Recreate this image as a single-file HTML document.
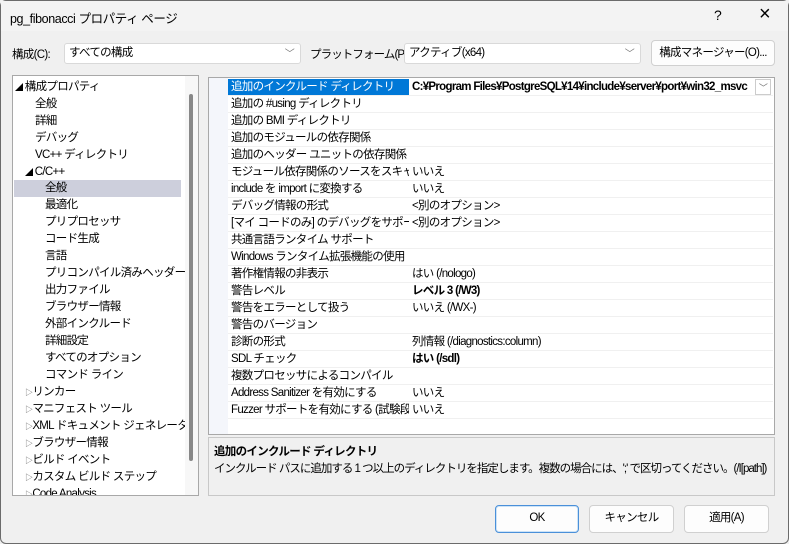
<!DOCTYPE html>
<html><head><meta charset="utf-8"><style>
*{margin:0;padding:0;box-sizing:border-box}
body{width:789px;height:544px;background:#f0f0f0;font-family:"Liberation Sans","Noto Sans CJK JP",sans-serif;font-size:11.5px;letter-spacing:-0.7px;color:#000;position:relative;overflow:hidden}
.abs{position:absolute;white-space:nowrap}
.win{position:absolute;left:0;top:0;width:789px;height:544px;border:1px solid #6b6b6b;border-radius:6px;background:#f0f0f0}
.title{position:absolute;left:1px;top:1px;width:787px;height:30px;background:#f3f3f3}
.combo{position:absolute;height:21px;background:#fff;border:1px solid #d9d9d9;border-radius:3px;padding:2px 4px;line-height:15px;white-space:nowrap}
.chev{position:absolute;right:6px;top:3px;color:#777;font-size:10px}
.btn{position:absolute;background:#fdfdfd;border:1px solid #d0d0d0;border-radius:4px;text-align:center;line-height:25px;white-space:nowrap}
.tree{position:absolute;left:12px;top:75px;width:187px;height:421px;background:#fff;border:1px solid #a8a8a8;overflow:hidden}
.ti{position:absolute;height:17px;line-height:17px;white-space:nowrap}
.grid{position:absolute;left:208px;top:77px;width:567px;height:358px;background:#fff;border:1px solid #a8a8a8;overflow:hidden}
.row{position:absolute;left:19px;width:545px;height:17px;border-bottom:1px solid #f0f0f0;line-height:16px}
.row .n{position:absolute;left:3px;width:178px;overflow:hidden;white-space:nowrap}
.row .v{position:absolute;left:184px;white-space:nowrap;overflow:hidden;width:355px}
.desc{position:absolute;left:208px;top:437px;width:567px;height:59px;border:1px solid #c8c8c8;background:#f0f0f0;overflow:hidden}
</style></head><body>
<div class="win"></div>
<div class="title"></div>
<div class="abs" style="left:10px;top:8px;font-size:12.5px;letter-spacing:-0.4px">pg_fibonacci プロパティ ページ</div>
<div class="abs" style="left:714px;top:7px;font-size:14px">?</div>
<div class="abs" style="left:759px;top:3px;font-size:20px;font-weight:300">×</div>

<div class="abs" style="left:12px;top:46px">構成(C):</div>
<div class="combo" style="left:64px;top:43px;width:237px">すべての構成<span class="chev">﹀</span></div>
<div class="abs" style="left:310px;top:46px;letter-spacing:-0.9px">プラットフォーム(P):</div>
<div class="combo" style="left:404px;top:43px;width:237px">アクティブ(x64)<span class="chev">﹀</span></div>
<div class="btn" style="left:651px;top:40px;width:124px;height:26px">構成マネージャー(O)...</div>

<div class="tree">
<div class="ti" style="left:2px;top:3px"><span style="font-size:8px">◢</span> 構成プロパティ</div>
<div class="ti" style="left:22px;top:20px">全般</div>
<div class="ti" style="left:22px;top:37px">詳細</div>
<div class="ti" style="left:22px;top:54px">デバッグ</div>
<div class="ti" style="left:22px;top:71px">VC++ ディレクトリ</div>
<div class="ti" style="left:12px;top:88px"><span style="font-size:8px">◢</span> C/C++</div>
<div class="ti" style="left:1px;top:104px;width:167px;background:#cdcfdc"></div>
<div class="ti" style="left:32px;top:104px">全般</div>
<div class="ti" style="left:32px;top:121px">最適化</div>
<div class="ti" style="left:32px;top:138px">プリプロセッサ</div>
<div class="ti" style="left:32px;top:155px">コード生成</div>
<div class="ti" style="left:32px;top:172px">言語</div>
<div class="ti" style="left:32px;top:189px">プリコンパイル済みヘッダー</div>
<div class="ti" style="left:32px;top:206px">出力ファイル</div>
<div class="ti" style="left:32px;top:223px">ブラウザー情報</div>
<div class="ti" style="left:32px;top:240px">外部インクルード</div>
<div class="ti" style="left:32px;top:257px">詳細設定</div>
<div class="ti" style="left:32px;top:274px">すべてのオプション</div>
<div class="ti" style="left:32px;top:291px">コマンド ライン</div>
<div class="ti" style="left:12px;top:308px"><span style="font-size:8px;color:#666">▷</span>リンカー</div>
<div class="ti" style="left:12px;top:325px"><span style="font-size:8px;color:#666">▷</span>マニフェスト ツール</div>
<div class="ti" style="left:12px;top:342px"><span style="font-size:8px;color:#666">▷</span>XML ドキュメント ジェネレーター</div>
<div class="ti" style="left:12px;top:359px"><span style="font-size:8px;color:#666">▷</span>ブラウザー情報</div>
<div class="ti" style="left:12px;top:376px"><span style="font-size:8px;color:#666">▷</span>ビルド イベント</div>
<div class="ti" style="left:12px;top:393px"><span style="font-size:8px;color:#666">▷</span>カスタム ビルド ステップ</div>
<div class="ti" style="left:12px;top:410px"><span style="font-size:8px;color:#666">▷</span>Code Analysis</div>
<div style="position:absolute;left:172px;top:0;width:14px;height:421px;background:#f7f7f7"></div>
<div style="position:absolute;left:176px;top:18px;width:4px;height:367px;background:#888;border-radius:2px"></div>
</div>

<div class="grid">
<div style="position:absolute;left:0;top:0;width:19px;height:358px;background:#f4f6fb"></div>
<div class="row" style="top:1px"><div class="n" style="left:0;width:181px;padding-left:3px;background:#0078d7;color:#fff;height:16px">追加のインクルード ディレクトリ</div><div class="v" style="font-weight:bold;width:345px">C:¥Program Files¥PostgreSQL¥14¥include¥server¥port¥win32_msvc</div><div style="position:absolute;right:2px;top:0;width:16px;height:16px;border:1px solid #ccc;color:#777;font-size:9px;text-align:center;background:#fff">﹀</div></div>
<div class="row" style="top:18px"><div class="n">追加の #using ディレクトリ</div></div>
<div class="row" style="top:35px"><div class="n">追加の BMI ディレクトリ</div></div>
<div class="row" style="top:52px"><div class="n">追加のモジュールの依存関係</div></div>
<div class="row" style="top:69px"><div class="n">追加のヘッダー ユニットの依存関係</div></div>
<div class="row" style="top:86px"><div class="n">モジュール依存関係のソースをスキャンする</div><div class="v">いいえ</div></div>
<div class="row" style="top:103px"><div class="n">include を import に変換する</div><div class="v">いいえ</div></div>
<div class="row" style="top:120px"><div class="n">デバッグ情報の形式</div><div class="v">&lt;別のオプション&gt;</div></div>
<div class="row" style="top:137px"><div class="n">[マイ コードのみ] のデバッグをサポートする</div><div class="v">&lt;別のオプション&gt;</div></div>
<div class="row" style="top:154px"><div class="n">共通言語ランタイム サポート</div></div>
<div class="row" style="top:171px"><div class="n" style="width:190px">Windows ランタイム拡張機能の使用</div></div>
<div class="row" style="top:188px"><div class="n">著作権情報の非表示</div><div class="v">はい (/nologo)</div></div>
<div class="row" style="top:205px"><div class="n">警告レベル</div><div class="v" style="font-weight:bold">レベル 3 (/W3)</div></div>
<div class="row" style="top:222px"><div class="n">警告をエラーとして扱う</div><div class="v">いいえ (/WX-)</div></div>
<div class="row" style="top:239px"><div class="n">警告のバージョン</div></div>
<div class="row" style="top:256px"><div class="n">診断の形式</div><div class="v">列情報 (/diagnostics:column)</div></div>
<div class="row" style="top:273px"><div class="n">SDL チェック</div><div class="v" style="font-weight:bold">はい (/sdl)</div></div>
<div class="row" style="top:290px"><div class="n">複数プロセッサによるコンパイル</div></div>
<div class="row" style="top:307px"><div class="n">Address Sanitizer を有効にする</div><div class="v">いいえ</div></div>
<div class="row" style="top:324px"><div class="n">Fuzzer サポートを有効にする (試験段階)</div><div class="v">いいえ</div></div>
</div>

<div class="desc">
<div class="abs" style="left:5px;top:5px;font-weight:bold">追加のインクルード ディレクトリ</div>
<div class="abs" style="left:5px;top:22px;letter-spacing:-1px">インクルード パスに追加する 1 つ以上のディレクトリを指定します。複数の場合には、';' で区切ってください。(/I[path])</div>
</div>

<div class="btn" style="left:495px;top:505px;width:84px;height:28px;border:1px solid #4a90d9;box-shadow:inset 0 0 0 1px #cde3f7">OK</div>
<div class="btn" style="left:589px;top:505px;width:85px;height:28px">キャンセル</div>
<div class="btn" style="left:684px;top:505px;width:85px;height:28px">適用(A)</div>
</body></html>
